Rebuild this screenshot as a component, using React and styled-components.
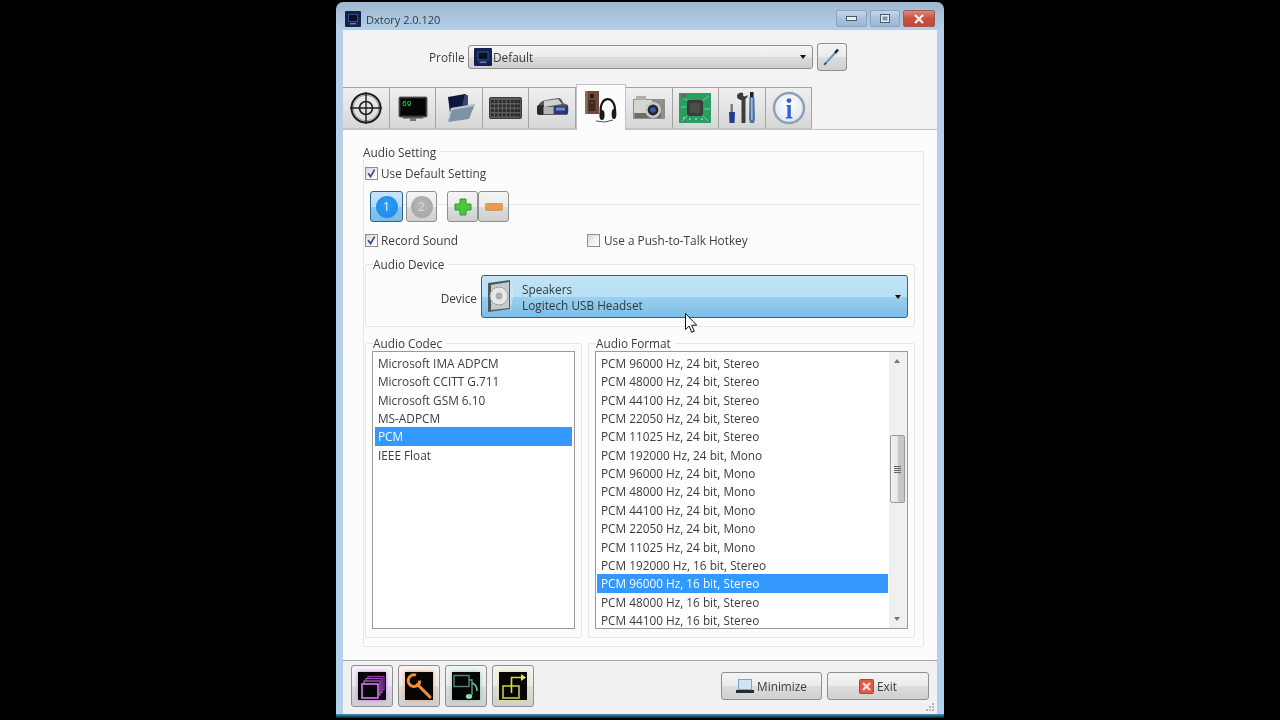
import React from "react";
import styled, { createGlobalStyle } from "styled-components";

const GlobalStyle = createGlobalStyle`
  html, body {
    margin: 0;
    width: 1280px;
    height: 720px;
    overflow: hidden;
    background: #000;
    font-family: "Open Sans", "Liberation Sans", sans-serif;
    font-size: 11.8px;
    color: #3c3c3c;
  }
  * { box-sizing: border-box; }
`;

const Page = styled.div`
  position: relative;
  width: 1280px;
  height: 720px;
  display: flex;
  justify-content: center;
  padding-top: 2px;
`;

const Window = styled.div`
  width: 608px;
  height: 716px;
  display: flex;
  flex-direction: column;
  padding: 0 7px;
  border-radius: 7px 7px 0 0;
  background: linear-gradient(180deg, #9fb8d2 0, #b6cfe8 28px, #b3d0ec 100%);
  filter: blur(0.3px);
`;

const TitleBar = styled.div`
  height: 28px;
  flex: none;
  display: flex;
  align-items: center;
  gap: 5px;
  margin-left: 2px;
  padding-top: 6px;
  color: #2f3a46;
  font-size: 11px;
`;

const TitleText = styled.span`
  flex: 1;
`;

const Controls = styled.div`
  display: flex;
  gap: 3px;
  margin-top: -1px;
  margin-right: 2px;
`;

const ControlButton = styled.div`
  width: ${(p) => p.$w}px;
  height: 17px;
  display: flex;
  align-items: center;
  justify-content: center;
  border: 1px solid ${(p) => (p.$close ? "#a05a50" : "#8aa3bd")};
  border-radius: 2px;
  background: ${(p) =>
    p.$close
      ? "linear-gradient(180deg, #d98a7a 0, #c9503c 50%, #c2493a 100%)"
      : "linear-gradient(180deg, #c3d6ea 0, #a9c2dc 50%, #9db9d6 100%)"};
`;

const Client = styled.div`
  height: 684px;
  flex: none;
  display: flex;
  flex-direction: column;
  background: #f3f3f3;
`;

const BottomEdge = styled.div`
  height: 4px;
  flex: none;
  margin: 0 -7px;
  background: linear-gradient(180deg, #4f9cc4 0, #1c5d7c 50%, #0a2230 100%);
`;

const ProfileRow = styled.div`
  height: 54px;
  flex: none;
  display: flex;
  align-items: center;
  padding-left: 86px;
`;

const ProfileLabel = styled.span`
  width: 39px;
`;

const Combo = styled.div`
  width: 345px;
  height: 24px;
  display: flex;
  align-items: center;
  gap: 1px;
  padding: 0 6px 0 5px;
  border: 1px solid #8e8f8f;
  border-radius: 3px;
  background: linear-gradient(180deg, #f5f5f5 0, #ebebeb 50%, #dcdcdc 51%, #cfcfcf 100%);
`;

const ComboText = styled.span`
  flex: 1;
`;

const Arrow = styled.span`
  width: 0;
  height: 0;
  border-left: 3.5px solid transparent;
  border-right: 3.5px solid transparent;
  border-top: 4px solid #111;
`;

const Button = styled.div`
  display: flex;
  align-items: center;
  justify-content: center;
  gap: 3px;
  flex: none;
  width: ${(p) => p.$w}px;
  height: ${(p) => p.$h}px;
  border: 1px solid ${(p) => (p.$on ? "#2c628b" : "#8e8f8f")};
  border-radius: 3px;
  background: ${(p) =>
    p.$on
      ? "linear-gradient(180deg, #c6e4f7 0, #b5dcf5 50%, #8cc7ee 51%, #79bbe8 100%)"
      : "linear-gradient(180deg, #f4f4f4 0, #ebebeb 50%, #dddddd 51%, #cfcfcf 100%)"};
`;

const PencilButton = styled(Button)`
  margin-left: 4px;
`;

const TabBar = styled.div`
  height: 46px;
  flex: none;
  display: flex;
  align-items: flex-end;
  border-bottom: 1px solid #c4c4c4;
`;

const Tab = styled.div`
  width: ${(p) => (p.$active ? 50 : 46.6)}px;
  height: ${(p) => (p.$active ? 46 : 42)}px;
  margin-bottom: ${(p) => (p.$active ? -1 : 0)}px;
  display: flex;
  align-items: center;
  justify-content: center;
  border: 1px solid ${(p) => (p.$active ? "#c2c2c2" : "#a3a3a3")};
  border-bottom: ${(p) => (p.$active ? "none" : "1px solid #c4c4c4")};
  border-left-width: ${(p) => (p.$active ? 1 : 0)}px;
  background: ${(p) =>
    p.$active ? "#fcfcfc" : "linear-gradient(180deg, #efefef 0, #e4e4e4 50%, #d6d6d6 100%)"};
  svg {
    filter: blur(0.4px);
  }
`;

const Content = styled.div`
  flex: 1;
  padding: 21px 13px 0 20px;
  background: #fcfcfc;
`;

const Group = styled.div`
  border: 1px solid #e6e8e8;
  border-radius: 2px;
`;

const SettingGroup = styled(Group)`
  padding: 1px 8px 8px 1px;
`;

const DeviceGroup = styled(Group)`
  margin-top: 16px;
  padding-bottom: 8px;
`;

const Legend = styled.div`
  width: fit-content;
  height: 16px;
  line-height: 16px;
  margin: -9px 0 0 ${(p) => p.$left ?? 7}px;
  padding-right: 4px;
  background: #fcfcfc;
`;

const CheckRow = styled.div`
  display: flex;
  height: 16px;
  margin-top: ${(p) => p.$top}px;
`;

const CheckLabel = styled.label`
  width: ${(p) => p.$w ?? 222}px;
  display: flex;
  align-items: center;
  gap: ${(p) => p.$gap ?? 3}px;
`;

const CheckBox = styled.span`
  width: 13px;
  height: 13px;
  flex: none;
  display: flex;
  align-items: center;
  justify-content: center;
  border: 1px solid #8e8f8f;
  background: linear-gradient(135deg, #d6d6d6 0, #f4f4f4 60%, #ffffff 100%);
`;

const SetRow = styled.div`
  position: relative;
  height: 31px;
  margin: 10px 0 0 5px;
  display: flex;
  gap: 3px;
  &::before {
    content: "";
    position: absolute;
    left: 30px;
    right: -5px;
    top: 13px;
    border-top: 1px solid #e4e4e4;
  }
  > * {
    position: relative;
  }
`;

const AddButton = styled(Button)`
  margin-left: ${(p) => p.$gap ?? 0}px;
`;

const Badge = styled.span`
  width: 22px;
  height: 22px;
  border-radius: 50%;
  display: flex;
  align-items: center;
  justify-content: center;
  color: ${(p) => (p.$on ? "#eaf5ff" : "#d8d8d8")};
  font-size: 12px;
  background: ${(p) =>
    p.$on
      ? "radial-gradient(circle at 50% 40%, #2f9cf5 0, #1a86ea 100%)"
      : "radial-gradient(circle at 50% 40%, #b8b8b8 0, #a2a2a2 100%)"};
`;

const DeviceRow = styled.div`
  display: flex;
  justify-content: flex-end;
  align-items: center;
  gap: 4px;
  margin-top: 3px;
  padding-right: 6px;
`;

const DeviceLabel = styled.span`
  padding-top: 2px;
`;

const DeviceCombo = styled.div`
  width: 427px;
  height: 43px;
  display: flex;
  align-items: center;
  padding: 0 6px 0 5px;
  border: 1px solid #2c628b;
  border-radius: 3px;
  background: linear-gradient(180deg, #c2e4f6 0, #b8e0f5 50%, #9ad0ef 51%, #7fbde6 100%);
  svg {
    filter: blur(0.4px);
  }
`;

const DeviceText = styled.div`
  flex: 1;
  margin-left: 7px;
  padding-top: 1px;
  line-height: 16px;
  color: #2d3a44;
`;

const LowerRow = styled.div`
  display: flex;
  gap: 6px;
  margin-top: 16px;
`;

const ListGroup = styled(Group)`
  width: ${(p) => p.$w}px;
  height: 295px;
  padding: 0 6px 8px;
`;

const ListBox = styled.div`
  height: 278px;
  display: flex;
  border: 1px solid #9a9a9a;
  background: #fff;
  overflow: hidden;
`;

const Rows = styled.div`
  flex: 1;
  padding: 2px ${(p) => p.$pad}px 0;
  margin-top: -0.1px;
`;

const Row = styled.div`
  height: 18.36px;
  line-height: 18.36px;
  padding-left: ${(p) => p.$indent ?? 4}px;
  color: ${(p) => (p.$selected ? "#f4faff" : "#3c3c3c")};
  background: ${(p) => (p.$selected ? "#3399ff" : "transparent")};
  white-space: nowrap;
`;

const ScrollBar = styled.div`
  width: 18px;
  display: flex;
  flex-direction: column;
  align-items: center;
  padding-right: 2px;
  background: #f0f0f0;
`;

const ScrollArrow = styled.span`
  margin-top: ${(p) => p.$top}px;
  margin-bottom: ${(p) => p.$bottom ?? 0}px;
  width: 0;
  height: 0;
  border-left: 3px solid transparent;
  border-right: 3px solid transparent;
  ${(p) => (p.$up ? "border-bottom: 4px solid #777;" : "border-top: 4px solid #777;")}
`;

const ScrollThumb = styled.div`
  width: 15px;
  height: 68px;
  margin-top: 72px;
  margin-bottom: auto;
  display: flex;
  flex-direction: column;
  align-items: center;
  justify-content: center;
  gap: 1px;
  border: 1px solid #9a9a9a;
  border-radius: 2px;
  background: linear-gradient(90deg, #f2f2f2 0, #e6e6e6 50%, #c8c8cc 51%, #c4c4c8 100%);
`;

const Grip = styled.span`
  width: 7px;
  height: 1px;
  background: #666;
`;

const Footer = styled.div`
  position: relative;
  height: 54px;
  flex: none;
  display: flex;
  justify-content: space-between;
  padding: 4px 8px 0;
  border-top: 1px solid #a8a8a8;
  background: #f1f1f1;
`;

const FooterGroup = styled.div`
  display: flex;
  gap: 5px;
  height: 42px;
  align-items: center;
`;

const FootIconBox = styled.svg`
  box-shadow: 0 0 4px ${(p) => p.$glow};
`;

const ResizeGrip = styled.svg`
  position: absolute;
  right: 2px;
  bottom: 2px;
`;

const CursorMark = styled.svg`
  position: absolute;
  left: 685px;
  top: 313px;
  filter: blur(0.3px);
`;

const AppIcon = ({ size = 16 }) => (
  <svg width={size} height={size} viewBox="0 0 16 16" style={{ flex: "none" }}>
    <rect width="16" height="16" rx="1" fill="#16204f" />
    <rect x="3" y="3" width="10" height="8" fill="#2f4d90" />
    <rect x="4" y="4" width="8" height="6" fill="#0a0f28" />
    <rect x="5" y="12" width="6" height="1.4" fill="#6b7fa8" />
  </svg>
);

const TargetIcon = () => (
  <svg width="34" height="34" viewBox="0 0 34 34" fill="none" stroke="#1d1d1d">
    <circle cx="17" cy="17" r="14.5" strokeWidth="2" />
    <circle cx="17" cy="17" r="12.8" strokeWidth="1" stroke="#999" />
    <circle cx="17" cy="17" r="6.5" strokeWidth="1.6" />
    <path d="M1 17h32M17 1v32" strokeWidth="1.4" />
  </svg>
);

const MonitorIcon = () => (
  <svg width="34" height="34" viewBox="0 0 34 34">
    <rect x="4" y="6" width="28" height="20" rx="1" fill="#1a1a1a" stroke="#666" />
    <rect x="6" y="8" width="24" height="16" fill="#050505" />
    <text x="7" y="14.5" fontFamily="Liberation Mono, monospace" fontSize="8" fill="#2fe04a">69</text>
    <path d="M9 26h18l2 1.5H7z" fill="#555" />
    <rect x="15" y="27" width="6" height="3" fill="#777" />
  </svg>
);

const FolderIcon = () => (
  <svg width="34" height="34" viewBox="0 0 34 34">
    <path d="M6 6l17-3 3 2v17L9 30z" fill="#10163a" />
    <path d="M23 3l3 2v9l-6 1z" fill="#3a466e" />
    <path d="M9 17l24-4-6 15-21 3z" fill="#7d93a5" />
    <path d="M9 17l24-4-1 2-22 4-3 11-1 1z" fill="#b9c8d2" />
  </svg>
);

const KeyboardIcon = () => (
  <svg width="35" height="26" viewBox="0 0 35 26">
    <rect x="1" y="2" width="33" height="22" rx="2" fill="#3a3a3a" />
    <rect x="2" y="3" width="31" height="20" rx="1" fill="#5c5c5c" />
    {[5, 9.5, 14, 18.5].map((y) =>
      [3, 7, 11, 15, 19, 23, 26.5, 29.5].map((x) => (
        <rect key={`${x}-${y}`} x={x} y={y} width="2.7" height="3" fill="#2a2a2a" />
      ))
    )}
  </svg>
);

const CamcorderIcon = () => (
  <svg width="36" height="26" viewBox="0 0 36 26">
    <path d="M4 11Q6 6 12 5L24 3Q28 3 29 8L34 10Q35 18 33 20L6 20Q3 18 4 11z" fill="#5a5a5a" />
    <path d="M10 6L24 4L28 9L10 12z" fill="#cfcfcf" />
    <rect x="3" y="10" width="7" height="10" rx="2" fill="#2a2a2a" />
    <rect x="9.5" y="12" width="10" height="7" fill="#b4b4b4" />
    <rect x="20" y="11" width="14" height="8" rx="1" fill="#26397f" />
    <rect x="22" y="12.5" width="9" height="3" fill="#6f88cc" />
  </svg>
);

const AudioIcon = () => (
  <svg width="36" height="36" viewBox="0 0 36 36">
    <rect x="2" y="1" width="14" height="23" fill="#6e4a3c" />
    <rect x="2" y="1" width="2.5" height="23" fill="#8e6e60" />
    <circle cx="9" cy="6" r="2.2" fill="#241a18" />
    <rect x="5.5" y="10" width="7" height="11" fill="#3c2a24" />
    <circle cx="9" cy="13" r="1" fill="#b03a2a" />
    <path d="M18 24C15 5 33 4 32 22" fill="none" stroke="#141414" strokeWidth="2.2" />
    <ellipse cx="19" cy="25" rx="2.6" ry="5" fill="#1b1b1b" />
    <ellipse cx="31" cy="24" rx="2.4" ry="5" fill="#1b1b1b" />
    <path d="M13 31L22 32L30 30" fill="none" stroke="#555" strokeWidth="1.2" />
  </svg>
);

const CameraIcon = () => (
  <svg width="36" height="28" viewBox="0 0 36 28">
    <rect x="2" y="5" width="32" height="20" rx="1" fill="#8f8f8a" />
    <rect x="3" y="6" width="18" height="13" fill="#d6d6d0" />
    <rect x="5" y="2" width="10" height="4" fill="#b0b0aa" />
    <rect x="4" y="19" width="26" height="5" fill="#6c6c68" />
    <circle cx="22" cy="16" r="8" fill="#c9c9c6" />
    <circle cx="22" cy="16" r="5.4" fill="#20242e" />
    <circle cx="22" cy="16" r="2.8" fill="#3d5aa8" />
  </svg>
);

const ChipIcon = () => (
  <svg width="34" height="34" viewBox="0 0 34 34">
    <rect x="1" y="2" width="32" height="30" fill="#2a9d63" />
    <path d="M3 4l7 6M31 5l-7 5M4 30l6-6M30 30l-6-6M3 16h5M26 18h6" stroke="#6fcf98" strokeWidth="1" />
    <rect x="9" y="9" width="16" height="16" rx="2" fill="#3a3d3b" />
    <rect x="12" y="12" width="10" height="10" fill="#4a4d4a" />
    <path d="M5 27h2M11 28h2M17 28h2M23 28h2" stroke="#c8e8d4" strokeWidth="1.2" />
    <rect x="3" y="3" width="5" height="4" fill="#6a6a56" />
  </svg>
);

const ToolsIcon = () => (
  <svg width="30" height="34" viewBox="0 0 30 34">
    <rect x="3.5" y="13" width="2.4" height="8" fill="#777" />
    <path d="M2 21h6l-.5 11h-5z" fill="#1f3f8a" />
    <path d="M10 4a4.6 4.6 0 0 0 3.5 5l1 0v23h4V8a4.6 4.6 0 0 0 2.5-4l-3 1.5-2-1 .2-2.5a5 5 0 0 0-6.2 2z" fill="#3c3c3c" />
    <rect x="23" y="1" width="3.6" height="5" fill="#222" />
    <path d="M22.4 6h5l.6 22-1 4h-4l-1-4z" fill="#4e74a8" />
    <rect x="24" y="7" width="1.6" height="22" fill="#9db6d6" />
  </svg>
);

const InfoIcon = () => (
  <svg width="34" height="34" viewBox="0 0 34 34">
    <defs>
      <radialGradient id="infoFill" cx="50%" cy="40%" r="60%">
        <stop offset="0" stopColor="#ffffff" />
        <stop offset="1" stopColor="#dfe7f2" />
      </radialGradient>
    </defs>
    <circle cx="17" cy="17" r="15" fill="url(#infoFill)" stroke="#8f9fb2" strokeWidth="2.4" />
    <circle cx="17" cy="9.6" r="2.4" fill="#2f64d8" />
    <path d="M14.6 14h4.2v12h1.6v1.6h-6.6v-1.6h1.6V15.6h-.8z" fill="#2f64d8" />
  </svg>
);

const PencilIcon = () => (
  <svg width="20" height="20" viewBox="0 0 20 20">
    <path d="M2 18L14 5" stroke="#6f93b8" strokeWidth="2" />
    <path d="M13 6l3-3.4" stroke="#1f2a38" strokeWidth="2.6" />
    <path d="M2 18l1-2.4 1.4 1.2z" fill="#222" />
  </svg>
);

const CheckMark = () => (
  <svg width="11" height="11" viewBox="0 0 11 11">
    <path d="M2.2 5.2L4.6 8.6 8.6 1.6" fill="none" stroke="#3b4f8c" strokeWidth="1.8" />
  </svg>
);

const PlusIcon = () => (
  <svg width="18" height="18" viewBox="0 0 18 18">
    <path d="M6 1h6v5h5v6h-5v5H6v-5H1V6h5z" fill="#4cc83a" stroke="#2f9a2a" strokeWidth="1" />
  </svg>
);

const MinusIcon = () => (
  <svg width="18" height="8" viewBox="0 0 18 8">
    <rect x="0.5" y="0.5" width="17" height="7" rx="1" fill="#f0984a" stroke="#b8a080" />
  </svg>
);

const SpeakerIcon = () => (
  <svg width="28" height="36" viewBox="0 0 28 36">
    <path d="M1 4l22-3v29L1 33z" fill="#50585e" />
    <path d="M4 6l18-3v26L4 31z" fill="#c4ccd0" />
    <path d="M23 1l4 12-4 20z" fill="#d8e6ee" opacity="0.7" />
    <circle cx="12" cy="17" r="9" fill="#e6e8e8" stroke="#9aa0a4" />
    <circle cx="12" cy="17" r="3.4" fill="#a8aeb2" />
  </svg>
);

const LaptopIcon = () => (
  <svg width="18" height="15" viewBox="0 0 18 15">
    <rect x="2.5" y="0.5" width="13" height="10" fill="#cfe2f6" stroke="#7ea4cc" />
    <path d="M0 11h18v3H0z" fill="#2b2b2b" />
  </svg>
);

const ExitIcon = () => (
  <svg width="15" height="15" viewBox="0 0 15 15">
    <rect x="0.5" y="0.5" width="14" height="14" rx="1" fill="#dd5a4a" stroke="#a8453c" />
    <path d="M4 4l7 7M11 4l-7 7" stroke="#f6e4dc" strokeWidth="2.2" />
  </svg>
);

const FootIcon = ({ glow, children }) => (
  <FootIconBox $glow={glow} width="28" height="28" viewBox="0 0 28 28" fill="none">
    <rect width="28" height="28" fill="#050505" />
    {children}
  </FootIconBox>
);

const codecs = ["Microsoft IMA ADPCM", "Microsoft CCITT G.711", "Microsoft GSM 6.10", "MS-ADPCM", "PCM", "IEEE Float"];

const formats = [
  "PCM 96000 Hz, 24 bit, Stereo",
  "PCM 48000 Hz, 24 bit, Stereo",
  "PCM 44100 Hz, 24 bit, Stereo",
  "PCM 22050 Hz, 24 bit, Stereo",
  "PCM 11025 Hz, 24 bit, Stereo",
  "PCM 192000 Hz, 24 bit, Mono",
  "PCM 96000 Hz, 24 bit, Mono",
  "PCM 48000 Hz, 24 bit, Mono",
  "PCM 44100 Hz, 24 bit, Mono",
  "PCM 22050 Hz, 24 bit, Mono",
  "PCM 11025 Hz, 24 bit, Mono",
  "PCM 192000 Hz, 16 bit, Stereo",
  "PCM 96000 Hz, 16 bit, Stereo",
  "PCM 48000 Hz, 16 bit, Stereo",
  "PCM 44100 Hz, 16 bit, Stereo",
];

const tabs = [TargetIcon, MonitorIcon, FolderIcon, KeyboardIcon, CamcorderIcon, AudioIcon, CameraIcon, ChipIcon, ToolsIcon, InfoIcon];

const App = () => (
  <>
    <GlobalStyle />
    <Page>
      <Window>
        <TitleBar>
          <AppIcon />
          <TitleText>Dxtory 2.0.120</TitleText>
          <Controls>
            <ControlButton $w={31}>
              <svg width="11" height="5"><rect x="0.5" y="0.5" width="10" height="4" fill="#e8eef5" stroke="#4c5a68" /></svg>
            </ControlButton>
            <ControlButton $w={30}>
              <svg width="10" height="9"><rect x="0.5" y="0.5" width="9" height="8" fill="#e8eef5" stroke="#4c5a68" /><rect x="2.5" y="2.5" width="5" height="4" fill="#7f93a8" /></svg>
            </ControlButton>
            <ControlButton $w={32} $close>
              <svg width="12" height="10"><path d="M2 1l8 8M10 1l-8 8" stroke="#f5eeee" strokeWidth="2.4" /></svg>
            </ControlButton>
          </Controls>
        </TitleBar>
        <Client>
          <ProfileRow>
            <ProfileLabel>Profile</ProfileLabel>
            <Combo>
              <AppIcon size={18} />
              <ComboText>Default</ComboText>
              <Arrow />
            </Combo>
            <PencilButton $w={30} $h={28}>
              <PencilIcon />
            </PencilButton>
          </ProfileRow>
          <TabBar>
            {tabs.map((Icon, i) => (
              <Tab key={i} $active={i === 5}>
                <Icon />
              </Tab>
            ))}
          </TabBar>
          <Content>
            <SettingGroup>
              <Legend $left={-2}>Audio Setting</Legend>
              <CheckRow $top={5}>
                <CheckLabel>
                  <CheckBox><CheckMark /></CheckBox>
                  Use Default Setting
                </CheckLabel>
              </CheckRow>
              <SetRow>
                <Button $w={33} $h={31} $on><Badge $on>1</Badge></Button>
                <Button $w={31} $h={31}><Badge>2</Badge></Button>
                <AddButton $w={31} $h={31} $gap={7}><PlusIcon /></AddButton>
                <AddButton $w={31} $h={31} $gap={-3}><MinusIcon /></AddButton>
              </SetRow>
              <CheckRow $top={10}>
                <CheckLabel>
                  <CheckBox><CheckMark /></CheckBox>
                  Record Sound
                </CheckLabel>
                <CheckLabel $w={200} $gap={4}>
                  <CheckBox />
                  Use a Push-to-Talk Hotkey
                </CheckLabel>
              </CheckRow>
              <DeviceGroup>
                <Legend>Audio Device</Legend>
                <DeviceRow>
                  <DeviceLabel>Device</DeviceLabel>
                  <DeviceCombo>
                    <SpeakerIcon />
                    <DeviceText>
                      Speakers
                      <br />
                      Logitech USB Headset
                    </DeviceText>
                    <Arrow />
                  </DeviceCombo>
                </DeviceRow>
              </DeviceGroup>
              <LowerRow>
                <ListGroup $w={217}>
                  <Legend $left={1}>Audio Codec</Legend>
                  <ListBox>
                    <Rows $pad={2}>
                      {codecs.map((c) => (
                        <Row key={c} $selected={c === "PCM"} $indent={3}>{c}</Row>
                      ))}
                    </Rows>
                  </ListBox>
                </ListGroup>
                <ListGroup $w={327}>
                  <Legend $left={1}>Audio Format</Legend>
                  <ListBox>
                    <Rows $pad={1}>
                      {formats.map((f, i) => (
                        <Row key={f} $selected={i === 12}>{f}</Row>
                      ))}
                    </Rows>
                    <ScrollBar>
                      <ScrollArrow $up $top={7} />
                      <ScrollThumb>
                        <Grip /><Grip /><Grip /><Grip />
                      </ScrollThumb>
                      <ScrollArrow $top={0} $bottom={7} />
                    </ScrollBar>
                  </ListBox>
                </ListGroup>
              </LowerRow>
            </SettingGroup>
          </Content>
          <Footer>
            <FooterGroup>
              <Button $w={42} $h={42}>
                <FootIcon glow="#d070f0">
                  <rect x="10" y="4.5" width="16" height="13" stroke="#8f3fa8" strokeWidth="1.2" />
                  <rect x="8" y="6.5" width="16" height="14" stroke="#a84fc0" strokeWidth="1.2" fill="#050505" />
                  <rect x="6" y="9" width="16" height="14" stroke="#c05fd8" strokeWidth="1.2" fill="#050505" />
                  <rect x="4" y="12" width="16" height="14" stroke="#d878f0" strokeWidth="1.6" fill="#050505" />
                </FootIcon>
              </Button>
              <Button $w={42} $h={42}>
                <FootIcon glow="#f0a060">
                  <path d="M11 3.2A5.8 5.8 0 1 0 14.8 8.5" stroke="#f09030" strokeWidth="3" />
                  <path d="M12.5 12.5L25 25" stroke="#f09030" strokeWidth="3" strokeLinecap="round" />
                </FootIcon>
              </Button>
              <Button $w={42} $h={42}>
                <FootIcon glow="#80d0a8">
                  <rect x="2" y="3.5" width="15" height="11" stroke="#4f8a72" strokeWidth="1.4" />
                  <path d="M17 8h3v15" stroke="#5a9a80" strokeWidth="1.4" />
                  <path d="M20 11c3 1 5 4 5 8" stroke="#70c098" strokeWidth="1.6" />
                  <ellipse cx="17" cy="24.5" rx="3.2" ry="2.4" fill="#80e0b0" />
                </FootIcon>
              </Button>
              <Button $w={42} $h={42}>
                <FootIcon glow="#e0e070">
                  <rect x="4" y="14" width="16" height="12" stroke="#c8c840" strokeWidth="1.6" />
                  <path d="M12.5 21V5.5H22" stroke="#dcdc48" strokeWidth="1.6" />
                  <path d="M22 2L27 5.5L22 9z" fill="#e6e650" />
                </FootIcon>
              </Button>
            </FooterGroup>
            <FooterGroup>
              <Button $w={101} $h={28}>
                <LaptopIcon />
                <span>Minimize</span>
              </Button>
              <Button $w={102} $h={28}>
                <ExitIcon />
                <span>Exit</span>
              </Button>
            </FooterGroup>
            <ResizeGrip width="10" height="10" viewBox="0 0 10 10" fill="#b8b8b8">
              <rect x="7" y="1" width="2" height="2" />
              <rect x="4" y="4" width="2" height="2" />
              <rect x="7" y="4" width="2" height="2" />
              <rect x="1" y="7" width="2" height="2" />
              <rect x="4" y="7" width="2" height="2" />
              <rect x="7" y="7" width="2" height="2" />
            </ResizeGrip>
          </Footer>
        </Client>
        <BottomEdge />
      </Window>
      <CursorMark width="13" height="21" viewBox="0 0 13 21">
        <path d="M0.5 0.5v16l3.6-3.4 2.6 6.2 2.6-1.1-2.6-6h5z" fill="#fff" stroke="#111" strokeWidth="1" />
      </CursorMark>
    </Page>
  </>
);

export default App;
